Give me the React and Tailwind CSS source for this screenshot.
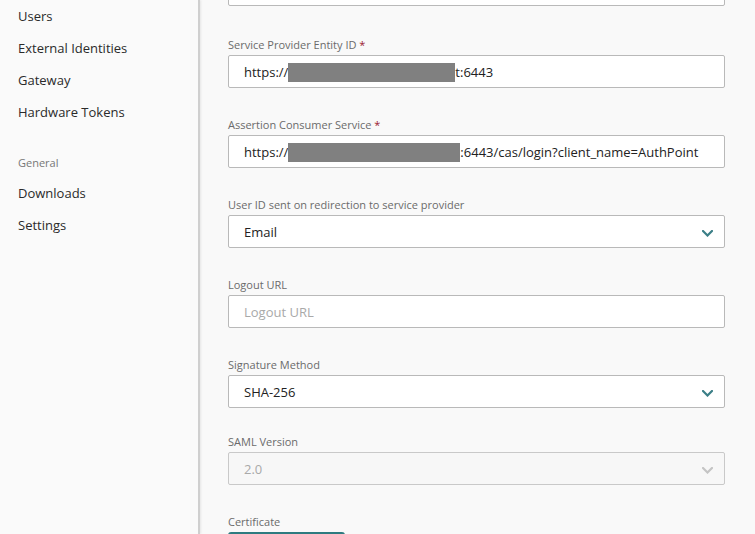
import React from "react";

const navTop = ["Users", "External Identities", "Gateway", "Hardware Tokens"];
const navGeneral = ["Downloads", "Settings"];

const Chevron = ({ disabled }) => (
  <svg width="11" height="7" viewBox="0 0 11 7" fill="none">
    <polyline
      points="1,1 5.5,5.5 10,1"
      stroke={disabled ? "#c4c4c4" : "#3b7f87"}
      strokeWidth="2.2"
      strokeLinecap="square"
    />
  </svg>
);

const Label = ({ children, required }) => (
  <div className="text-[11px] leading-[15px] text-[#6b6b6b] mb-[3px]">
    {children}
    {required && <span className="text-[#9b1b30]"> *</span>}
  </div>
);

const Redacted = ({ w }) => (
  <span className={"inline-block h-[19px] bg-[#808080] " + (w === "short" ? "w-[167px]" : "w-[172px]")} />
);

const TextBox = ({ children, placeholder }) => (
  <div className="h-[33px] bg-white border border-[#b9b9b9] rounded-[2px] flex items-center pl-[15px] pt-[2px] text-[13px] text-[#222]">
    {children ? children : <span className="text-[#a9a9a9]">{placeholder}</span>}
  </div>
);

const SelectBox = ({ value, disabled }) => (
  <div
    className={
      "h-[33px] border rounded-[2px] flex items-center text-[13px] " +
      (disabled ? "bg-[#f7f7f7] border-[#c9c9c9] text-[#a9a9a9]" : "bg-white border-[#b9b9b9] text-[#222]")
    }
  >
    <div className="flex-1 pl-[15px] pt-[2px]">{value}</div>
    <div className="w-[30px] flex items-center justify-center pr-[3px] pt-[3px]">
      <Chevron disabled={disabled} />
    </div>
  </div>
);

export default function App() {
  return (
    <div
      className="flex w-[755px] h-[534px] overflow-hidden bg-[#f9f9f9]"
      style={{ fontFamily: '"Open Sans", "Noto Sans", sans-serif' }}
    >
      {/* SIDEBAR */}
      <div className="w-[200px] shrink-0 pt-[1px] bg-[#fafafa] border-r-2 border-[#cfcfcf] shadow-[1px_0_2px_rgba(0,0,0,0.08)]">
        {navTop.map((item) => (
          <div key={item} className="h-[32px] flex items-center pl-[18px] text-[13px] text-[#2a2a2a]">
            {item}
          </div>
        ))}
        <div className="mt-[26px] mb-[7px] pl-[18px] text-[11px] leading-[16px] text-[#777]">General</div>
        {navGeneral.map((item) => (
          <div key={item} className="h-[32px] flex items-center pl-[18px] text-[13px] text-[#2a2a2a]">
            {item}
          </div>
        ))}
      </div>

      {/* FORM */}
      <div className="flex-1 pl-[28px] pr-[30px]">
        <div className="-mt-[27px] mb-[31px] h-[33px] bg-white border border-[#b9b9b9] rounded-[2px]" />

        <div className="mb-[29px]">
          <Label required>Service Provider Entity ID</Label>
          <TextBox>
            <span>https://</span>
            <Redacted w="short" />
            <span>t:6443</span>
          </TextBox>
        </div>

        <div className="mb-[29px]">
          <Label required>Assertion Consumer Service</Label>
          <TextBox>
            <span>https://</span>
            <Redacted />
            <span>:6443/cas/login?client_name=AuthPoint</span>
          </TextBox>
        </div>

        <div className="mb-[29px]">
          <Label>User ID sent on redirection to service provider</Label>
          <SelectBox value="Email" />
        </div>

        <div className="mb-[29px]">
          <Label>Logout URL</Label>
          <TextBox placeholder="Logout URL" />
        </div>

        <div className="mb-[26px]">
          <Label>Signature Method</Label>
          <SelectBox value="SHA-256" />
        </div>

        <div className="mb-[29px]">
          <Label>SAML Version</Label>
          <SelectBox value="2.0" disabled />
        </div>

        <div>
          <Label>Certificate</Label>
          <div className="w-[117px] h-[33px] mt-[1px] rounded-[3px] bg-[#2e7b80]" />
        </div>
      </div>
    </div>
  );
}
